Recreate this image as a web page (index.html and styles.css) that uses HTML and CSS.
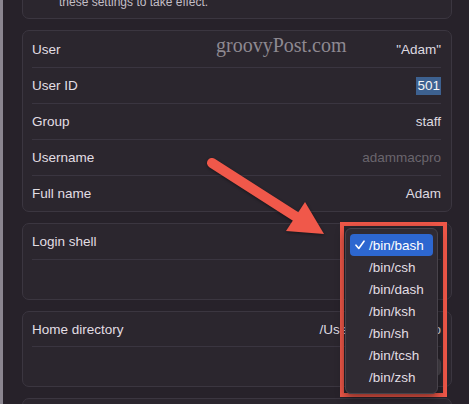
FILE: index.html
```html
<!DOCTYPE html>
<html lang="en">
<head>
<meta charset="utf-8">
<title>User settings</title>
<link rel="stylesheet" href="styles.css">
</head>
<body>
<div class="window">
  <div class="edge"></div>
  <main class="content">
    <section class="card card-note">
      <p class="note">these settings to take effect.</p>
    </section>

    <section class="card">
      <div class="row"><span class="label">User</span><span class="value">"Adam"</span></div>
      <div class="row"><span class="label">User ID</span><span class="value"><span class="selected-text">501</span></span></div>
      <div class="row"><span class="label">Group</span><span class="value">staff</span></div>
      <div class="row"><span class="label">Username</span><span class="value value-dim">adammacpro</span></div>
      <div class="row"><span class="label">Full name</span><span class="value">Adam</span></div>
    </section>

    <section class="card">
      <div class="row row-35"><span class="label">Login shell</span></div>
      <div class="row row-40"></div>
    </section>

    <section class="card">
      <div class="row row-34"><span class="label">Home directory</span><span class="value">/Users/adammacpro</span></div>
      <div class="row row-40"><span></span><span class="button"></span></div>
    </section>

    <section class="card card-cut"></section>
  </main>
</div>

<div class="watermark">groovyPost.com</div>

<svg class="arrow" viewBox="200 150 130 90" width="130" height="90" aria-hidden="true">
  <line x1="212" y1="163" x2="298" y2="218" stroke="#f0584a" stroke-width="10" stroke-linecap="round"/>
  <polygon points="305,202 286,231 324,234" fill="#f0584a"/>
</svg>

<div class="callout"></div>

<div class="menu">
  <div class="menu-item menu-item-active">
    <svg class="check" viewBox="0 0 10 10" width="10" height="10"><path d="M1 5.2 L3.8 8.5 L9 1.2" fill="none" stroke="#ffffff" stroke-width="1.6" stroke-linecap="round" stroke-linejoin="round"/></svg>
    <span>/bin/bash</span>
  </div>
  <div class="menu-item"><span>/bin/csh</span></div>
  <div class="menu-item"><span>/bin/dash</span></div>
  <div class="menu-item"><span>/bin/ksh</span></div>
  <div class="menu-item"><span>/bin/sh</span></div>
  <div class="menu-item"><span>/bin/tcsh</span></div>
  <div class="menu-item"><span>/bin/zsh</span></div>
</div>
</body>
</html>
```

FILE: styles.css
```css
html, body {
  margin: 0;
  padding: 0;
}

body {
  width: 469px;
  height: 404px;
  overflow: hidden;
  position: relative;
  background: #27222a;
  font-family: "Liberation Sans", Arial, sans-serif;
  font-size: 13.5px;
  color: #e0dce2;
}

.window {
  display: flex;
  height: 404px;
  overflow: hidden;
}

.edge {
  width: 3px;
  flex: none;
  background: #8b8690;
}

.content {
  flex: 1;
  display: flex;
  flex-direction: column;
  gap: 11px;
  padding: 0 17px 0 19px;
}

.card {
  flex: none;
  background: #2b262e;
  border: 1px solid #3b3640;
  border-radius: 7px;
  padding: 0 10px 0 9px;
}

.card-note {
  margin-top: -22px;
  padding: 16px 10px 8px 36px;
}

.note {
  margin: 0;
  font-size: 12px;
  line-height: 15px;
  color: #c4bfc6;
}

.card-cut {
  height: 40px;
}

.row {
  display: flex;
  justify-content: space-between;
  align-items: center;
  height: 36px;
  box-sizing: border-box;
}

.row + .row {
  border-top: 1px solid #3a3540;
}

.row-34 { height: 34px; }
.row-35 { height: 35px; }
.row-40 { height: 40px; }

.label {
  color: #e2dee4;
}

.value {
  color: #dedae0;
}

.value-dim {
  color: #6a656d;
}

.selected-text {
  display: inline-block;
  background: #3d6190;
  color: #f4f4f6;
  line-height: 18px;
  padding: 0 1px;
}

.button {
  display: inline-block;
  width: 70px;
  height: 18px;
  background: #4a454d;
  border-radius: 5px;
}

.watermark {
  position: absolute;
  left: 216px;
  top: 35px;
  font-family: "Liberation Serif", "Times New Roman", serif;
  font-size: 20px;
  line-height: 20px;
  color: #8e8991;
}

.arrow {
  position: absolute;
  left: 200px;
  top: 150px;
  filter: drop-shadow(0 1px 1.5px rgba(0, 0, 0, 0.45));
}

.callout {
  position: absolute;
  left: 340px;
  top: 222px;
  width: 99px;
  height: 167px;
  border: 4px solid #ef5748;
}

.menu {
  position: absolute;
  left: 345px;
  top: 228px;
  width: 93px;
  box-sizing: border-box;
  padding: 5px 4px;
  background: #302b33;
  border: 1px solid #48434b;
  border-radius: 6px;
  box-shadow: 0 3px 10px rgba(0, 0, 0, 0.5);
}

.menu-item {
  position: relative;
  height: 22px;
  display: flex;
  align-items: center;
  padding-left: 19px;
  border-radius: 4px;
  color: #e2dee4;
  white-space: nowrap;
}

.menu-item-active {
  background: #2d67d0;
  color: #ffffff;
}

.check {
  position: absolute;
  left: 5px;
  top: 6px;
}
```
